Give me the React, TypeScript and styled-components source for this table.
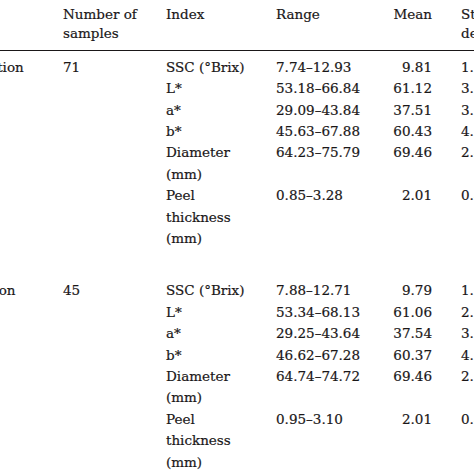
import styled, { createGlobalStyle } from "styled-components";

const GlobalStyle = createGlobalStyle`
  html, body {
    margin: 0;
    padding: 0;
    background: #ffffff;
  }
  body {
    font-family: "DejaVu Serif", "Liberation Serif", serif;
    color: #1a1718;
  }
`;

type Stat = {
  index: string;
  range: string;
  mean: string;
  sd: string;
};

type DataSet = {
  name: string;
  count: string;
  stats: Stat[];
};

const dataSets: DataSet[] = [
  {
    name: "Calibration",
    count: "71",
    stats: [
      { index: "SSC (°Brix)", range: "7.74–12.93", mean: "9.81", sd: "1.12" },
      { index: "L*", range: "53.18–66.84", mean: "61.12", sd: "3.05" },
      { index: "a*", range: "29.09–43.84", mean: "37.51", sd: "3.27" },
      { index: "b*", range: "45.63–67.88", mean: "60.43", sd: "4.36" },
      { index: "Diameter (mm)", range: "64.23–75.79", mean: "69.46", sd: "2.41" },
      { index: "Peel thickness (mm)", range: "0.85–3.28", mean: "2.01", sd: "0.48" },
    ],
  },
  {
    name: "Validation",
    count: "45",
    stats: [
      { index: "SSC (°Brix)", range: "7.88–12.71", mean: "9.79", sd: "1.08" },
      { index: "L*", range: "53.34–68.13", mean: "61.06", sd: "2.94" },
      { index: "a*", range: "29.25–43.64", mean: "37.54", sd: "3.19" },
      { index: "b*", range: "46.62–67.28", mean: "60.37", sd: "4.22" },
      { index: "Diameter (mm)", range: "64.74–74.72", mean: "69.46", sd: "2.36" },
      { index: "Peel thickness (mm)", range: "0.95–3.10", mean: "2.01", sd: "0.46" },
    ],
  },
];

// the screenshot is a crop of a wider table, so the table runs past both edges
const Frame = styled.div`
  width: 474px;
  height: 474px;
  overflow: hidden;
  background: #ffffff;
`;

const Table = styled.div`
  width: 610px;
  margin-left: -53px;
  font-size: 13.5px;
  -webkit-text-stroke: 0.2px #1a1718;
`;

const Row = styled.div<{ lineHeight: number }>`
  display: grid;
  grid-template-columns: 116px 103px 110px 100px 56px 1fr;
  line-height: ${(props) => props.lineHeight}px;
`;

const Header = styled.div`
  padding: 4.5px 0 7px;
  border-bottom: 1.5px solid #1a1718;
`;

const Body = styled.div`
  padding-top: 6.3px;
`;

const Group = styled.div`
  padding-bottom: 31px;
`;

const Cell = styled.div<{ align?: "left" | "right" }>`
  text-align: ${(props) => props.align ?? "left"};
`;

const IndexCell = styled(Cell)`
  padding-right: 28px;
`;

const SdCell = styled(Cell)`
  padding-left: 29px;
`;

export default function App() {
  return (
    <Frame>
      <GlobalStyle />
      <Table>
        <Header>
          <Row lineHeight={19}>
            <Cell />
            <Cell>Number of samples</Cell>
            <IndexCell>Index</IndexCell>
            <Cell>Range</Cell>
            <Cell align="right">Mean</Cell>
            <SdCell>Standard deviation</SdCell>
          </Row>
        </Header>
        <Body>
          {dataSets.map((set) => (
            <Group key={set.name}>
              {set.stats.map((stat, i) => (
                <Row lineHeight={21.4} key={stat.index}>
                  <Cell>{i === 0 ? set.name : ""}</Cell>
                  <Cell>{i === 0 ? set.count : ""}</Cell>
                  <IndexCell>{stat.index}</IndexCell>
                  <Cell>{stat.range}</Cell>
                  <Cell align="right">{stat.mean}</Cell>
                  <SdCell>{stat.sd}</SdCell>
                </Row>
              ))}
            </Group>
          ))}
        </Body>
      </Table>
    </Frame>
  );
}
